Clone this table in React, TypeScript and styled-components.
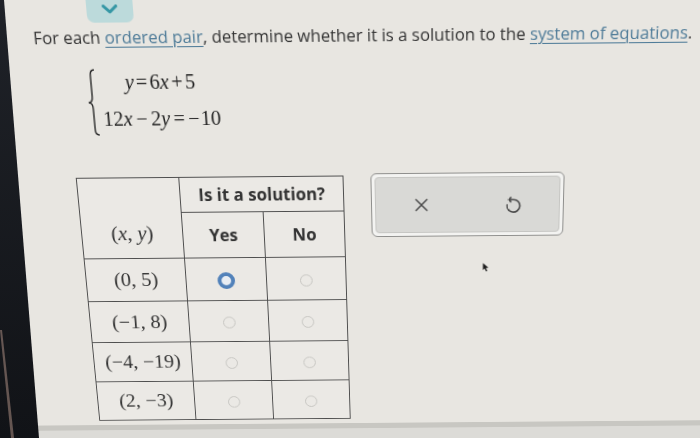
import styled, { createGlobalStyle } from "styled-components";

const GlobalStyle = createGlobalStyle`
  html, body {
    margin: 0;
    padding: 0;
    overflow: hidden;
    background: #e7e5e0;
  }
  body {
    font-family: "Open Sans", "DejaVu Sans", sans-serif;
    color: #333;
  }
`;

// the photo is taken at an angle, so the whole screen gets a slight tilt
const Screen = styled.div`
  position: relative;
  width: 740px;
  height: 490px;
  display: flex;
  flex-direction: column;
  background: #e8e6e1;
  transform-origin: 427px 160px;
  transform: perspective(600px) rotateX(-8.53deg) rotate(-0.5deg);
`;

const Bezel = styled.div`
  position: fixed;
  left: 0;
  top: 0;
  width: 42px;
  height: 438px;
  background: linear-gradient(180deg, #1f2228, #111317);
  clip-path: polygon(0 0, 4px 0, 39px 438px, 0 438px);
  pointer-events: none;
`;

const BezelGlint = styled.div`
  position: fixed;
  left: 0;
  top: 0;
  width: 20px;
  height: 438px;
  background: rgba(170, 140, 130, 0.55);
  clip-path: polygon(0 330px, 2px 330px, 14px 438px, 11px 438px);
  pointer-events: none;
`;

const TabRow = styled.div`
  height: 23px;
  padding-left: 100px;
  display: flex;
`;

const CollapseTab = styled.div`
  width: 45px;
  height: 23px;
  box-sizing: border-box;
  padding-bottom: 3px;
  background: #bcdadb;
  border-radius: 0 0 7px 7px;
  display: flex;
  align-items: center;
  justify-content: center;
`;

const Prompt = styled.p`
  margin: 4px 0 0;
  padding-left: 46px;
  font-size: 16.3px;
  line-height: 20px;
  color: #333;
  white-space: nowrap;
`;

const TermLink = styled.span`
  color: #4e7b98;
  text-decoration: underline;
  text-decoration-thickness: 1px;
  text-underline-offset: 3px;
`;

const SystemBlock = styled.div`
  margin-top: 20px;
  padding-left: 93px;
  height: 66px;
  display: flex;
  gap: 4px;
  font-family: "Liberation Serif", "DejaVu Serif", serif;
  font-size: 20px;
  color: #222;
`;

const EquationLines = styled.div`
  display: flex;
  flex-direction: column;
  align-items: center;
  gap: 9.5px;
`;

const EquationLine = styled.div`
  height: 26px;
  line-height: 26px;
  white-space: nowrap;
`;

const Op = styled.span<{ $space: number }>`
  margin: 0 ${(p) => p.$space}em;
`;

const MainRow = styled.div`
  margin-top: 42px;
  padding-left: 74px;
  display: flex;
  align-items: flex-start;
  gap: 27px;
`;

const PairTable = styled.table`
  width: 268px;
  border-collapse: collapse;
  table-layout: fixed;
  background: #ebe9e5;
  color: #333;

  th,
  td {
    border: 1.5px solid #4e4e4e;
    padding: 0;
    text-align: center;
  }
`;

const HeadCell = styled.th<{ $h: number }>`
  height: ${(p) => p.$h}px;
  font-family: "Open Sans", "DejaVu Sans", sans-serif;
  font-weight: 700;
  font-size: 17px;
`;

const PairHead = styled.th`
  vertical-align: top;
  padding-top: 45px !important;
  font-family: "Liberation Serif", "DejaVu Serif", serif;
  font-weight: 400;
  font-size: 21px;
  line-height: 24px;
`;

const PairCell = styled.td<{ $h: number }>`
  height: ${(p) => p.$h}px;
  font-family: "Liberation Serif", "DejaVu Serif", serif;
  font-size: 21px;
  white-space: nowrap;
`;

const ChoiceCell = styled.td``;

const Radio = styled.span<{ $on?: boolean }>`
  display: inline-block;
  vertical-align: middle;
  box-sizing: border-box;
  width: ${(p) => (p.$on ? 18 : 13)}px;
  height: ${(p) => (p.$on ? 18 : 13)}px;
  border-radius: 50%;
  border: ${(p) => (p.$on ? "4px solid #5282ba" : "1px solid #c6c5c1")};
  background: ${(p) => (p.$on ? "#e8edf3" : "#ebe9e5")};
`;

const ToolPanel = styled.div`
  width: 195px;
  height: 66px;
  margin-top: -2px;
  box-sizing: border-box;
  border: 1px solid #8e8e8c;
  border-radius: 6px;
  padding: 3px;
  background: #f3f3f1;
  display: flex;
`;

const ToolInner = styled.div`
  flex: 1;
  display: flex;
  background: #d9d9d6;
  border: 1px solid #c6c6c3;
  border-radius: 4px;
`;

const ToolButton = styled.button`
  flex: 1;
  border: 0;
  padding: 0;
  background: transparent;
  display: flex;
  align-items: center;
  justify-content: center;
  color: #4a4a4a;
`;

const Footer = styled.div`
  margin-top: 5px;
  flex: 1;
  border-top: 6px solid #c8c7c2;
  background: #dcdbd7;
`;

const Pointer = styled.svg`
  position: absolute;
  left: 483px;
  top: 267px;
`;

const pairs = [
  { label: "(0, 5)", yes: true, h: 45 },
  { label: "(−1, 8)", yes: false, h: 44 },
  { label: "(−4, −19)", yes: false, h: 43 },
  { label: "(2, −3)", yes: false, h: 43 },
];

function Brace() {
  return (
    <svg width="10" height="66" viewBox="0 0 10 66">
      <path
        d="M9 1 C5 1 5 4 5 10 L5 27 C5 31 3.5 33 1 33 C3.5 33 5 35 5 39 L5 56 C5 62 5 65 9 65"
        fill="none"
        stroke="#2a2a2a"
        strokeWidth="1.4"
      />
    </svg>
  );
}

export default function App() {
  return (
    <>
      <GlobalStyle />
      <Screen>
        <TabRow>
          <CollapseTab>
            <svg width="15" height="9" viewBox="0 0 15 9">
              <path d="M1.5 1.5 L7.5 7 L13.5 1.5" fill="none" stroke="#3597a5" strokeWidth="3" strokeLinecap="round" strokeLinejoin="round" />
            </svg>
          </CollapseTab>
        </TabRow>

        <Prompt>
          For each <TermLink>ordered pair</TermLink>, determine whether it is a solution to the{" "}
          <TermLink>system of equations</TermLink>.
        </Prompt>

        <SystemBlock>
          <Brace />
          <EquationLines>
            <EquationLine>
              <i>y</i>
              <Op $space={0.1}>=</Op>6<i>x</i>
              <Op $space={0.12}>+</Op>5
            </EquationLine>
            <EquationLine>
              12<i>x</i>
              <Op $space={0.18}>−</Op>2<i>y</i>
              <Op $space={0.16}>=</Op>−<Op $space={0.06}>10</Op>
            </EquationLine>
          </EquationLines>
        </SystemBlock>

        <MainRow>
          <PairTable>
            <colgroup>
              <col style={{ width: 103 }} />
              <col style={{ width: 83 }} />
              <col style={{ width: 82 }} />
            </colgroup>
            <thead>
              <tr>
                <PairHead rowSpan={2}>
                  (<i>x</i>, <i>y</i>)
                </PairHead>
                <HeadCell $h={35} colSpan={2}>
                  Is it a solution?
                </HeadCell>
              </tr>
              <tr>
                <HeadCell $h={47}>Yes</HeadCell>
                <HeadCell $h={47}>No</HeadCell>
              </tr>
            </thead>
            <tbody>
              {pairs.map((p) => (
                <tr key={p.label}>
                  <PairCell $h={p.h}>{p.label}</PairCell>
                  <ChoiceCell>
                    <Radio $on={p.yes} />
                  </ChoiceCell>
                  <ChoiceCell>
                    <Radio />
                  </ChoiceCell>
                </tr>
              ))}
            </tbody>
          </PairTable>

          <ToolPanel>
            <ToolInner>
              <ToolButton aria-label="Clear">
                <svg width="14" height="14" viewBox="0 0 13 13">
                  <path d="M1 1 L12 12 M12 1 L1 12" stroke="currentColor" strokeWidth="1.4" />
                </svg>
              </ToolButton>
              <ToolButton aria-label="Undo">
                <svg width="19" height="21" viewBox="0 0 16 18">
                  <path d="M4.5 4.5 H8.5 A5.5 5.5 0 1 1 3.2 8.6" fill="none" stroke="currentColor" strokeWidth="1.4" />
                  <path d="M6.5 2.3 L4.3 4.5 L6.5 6.7" fill="none" stroke="currentColor" strokeWidth="1.4" />
                </svg>
              </ToolButton>
            </ToolInner>
          </ToolPanel>
        </MainRow>

        <Footer />

        <Pointer width="7" height="10" viewBox="0 0 7 10">
          <path d="M0.5 0.5 L0.5 8 L2.3 6.3 L3.8 9.5 L5 9 L3.6 5.8 L6.2 5.6 Z" fill="#1c1c1c" />
        </Pointer>
      </Screen>
      <Bezel />
      <BezelGlint />
    </>
  );
}
